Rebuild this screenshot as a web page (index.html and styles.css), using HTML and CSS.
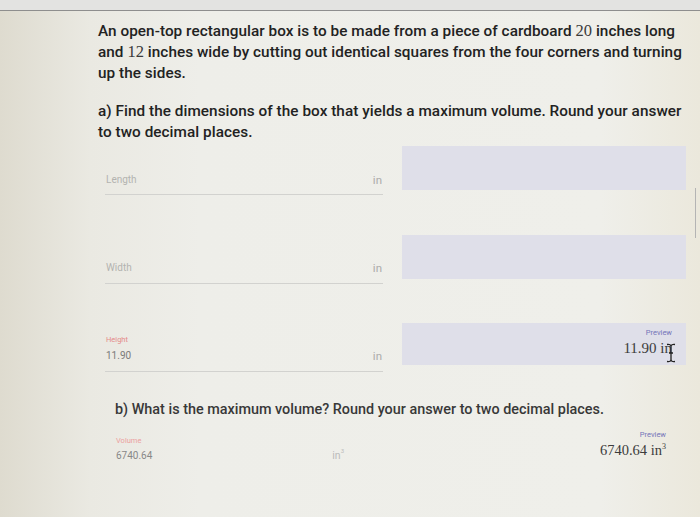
FILE: index.html
```html
<!DOCTYPE html>
<html>
<head>
<meta charset="utf-8">
<link rel="stylesheet" href="styles.css">
</head>
<body>
<div class="topbar"></div>
<div class="edge"></div>
<main class="content">
  <p class="q">An open-top rectangular box is to be made from a piece of cardboard <span class="m">20</span> inches long and <span class="m">12</span> inches wide by cutting out identical squares from the four corners and turning up the sides.</p>
  <p class="q q2">a) Find the dimensions of the box that yields a maximum volume. Round your answer to two decimal places.</p>

  <div class="row r1">
    <div class="field">
      <div class="ftext"><span class="ph">Length</span></div>
      <span class="unit">in</span>
    </div>
    <div class="box"></div>
  </div>

  <div class="row r2">
    <div class="field">
      <div class="ftext"><span class="ph">Width</span></div>
      <span class="unit">in</span>
    </div>
    <div class="box"></div>
  </div>

  <div class="row r3">
    <div class="field">
      <div class="ftext"><span class="lbl">Height</span><span class="val">11.90</span></div>
      <span class="unit">in</span>
    </div>
    <div class="box prev">
      <span class="plbl">Preview</span>
      <span class="pval">11.90 in</span>
      <svg class="ibeam" width="10" height="20" viewBox="0 0 10 20"><path d="M1 1.5 Q5 1 5 3.5 L5 16.5 Q5 19 1 18.5 M9 1.5 Q5 1 5 3.5 M5 16.5 Q5 19 9 18.5 M3 10 L7 10" fill="none" stroke="#222" stroke-width="1.3"/></svg>
    </div>
  </div>

  <p class="qb">b) What is the maximum volume? Round your answer to two decimal places.</p>

  <div class="row r4">
    <div class="field nofield">
      <div class="ftext"><span class="lbl">Volume</span><span class="val">6740.64</span></div>
      <span class="unit">in<sup>3</sup></span>
    </div>
    <div class="box prev clear">
      <span class="plbl">Preview</span>
      <span class="pval">6740.64 in<sup>3</sup></span>
    </div>
  </div>
</main>
</body>
</html>
```

FILE: styles.css
```css
html, body {
  margin: 0;
  padding: 0;
}
body {
  width: 700px;
  height: 517px;
  overflow: hidden;
  position: relative;
  font-family: Roboto, "Liberation Sans", sans-serif;
  background: linear-gradient(90deg, #dedbcf 0px, #eae9e2 90px, #eeeee9 200px, #efefea 600px, #ebe8dc 700px);
}
.topbar {
  height: 10px;
  background: #e3e3e1;
  border-bottom: 1.5px solid #8e8e8e;
}
.edge {
  position: absolute;
  left: 695px;
  top: 188px;
  width: 1px;
  height: 50px;
  background: #b4b4b4;
}
.content {
  padding-left: 98px;
}
.q {
  margin: 10px 0 0;
  width: 590px;
  font-size: 15.3px;
  line-height: 21px;
  font-weight: 500;
  color: #222;
  letter-spacing: 0.05px;
}
.q2 {
  margin-top: 17px;
}
.m {
  font-family: "Liberation Serif", serif;
  font-weight: normal;
  font-size: 16.5px;
  line-height: 1;
  color: #3a3a3a;
}
.row {
  display: grid;
  grid-template-columns: 278px 284px;
  column-gap: 19px;
  margin-left: 7px;
}
.r1 { margin-top: 3px; }
.r2 { margin-top: 40px; }
.r3 { margin-top: 39px; }
.field {
  display: flex;
  justify-content: space-between;
  align-items: flex-end;
  border-bottom: 1px solid #d2d2cf;
  height: 49px;
  padding-bottom: 8px;
  box-sizing: border-box;
}
.r2 .field { padding-bottom: 9px; }
.r3 .field { height: 49px; padding-bottom: 9px; }
.ftext {
  display: flex;
  flex-direction: column;
  padding-left: 1px;
}
.ph {
  font-size: 10px;
  line-height: 12px;
  color: #b3b3b0;
}
.lbl {
  font-size: 7.5px;
  line-height: 10px;
  color: #e58a8a;
}
.val {
  margin-top: 5px;
  font-size: 10px;
  line-height: 12px;
  color: #7a7a7a;
}
.unit {
  font-size: 11.5px;
  line-height: 12px;
  color: #acacaa;
  padding-right: 1px;
}
.unit sup {
  font-size: 6px;
  line-height: 1;
  vertical-align: 6px;
}
.box {
  height: 44px;
  background: #dfdfe9;
}
.r3 .box { height: 42px; }
.prev {
  position: relative;
  display: flex;
  flex-direction: column;
  align-items: flex-end;
  padding: 5px 14px 0 0;
  box-sizing: border-box;
}
.plbl {
  font-size: 7.5px;
  line-height: 10px;
  color: #7474b8;
}
.pval {
  margin-top: 2px;
  font-family: "Liberation Serif", serif;
  font-size: 15px;
  line-height: 17px;
  color: #3c3c3c;
}
.pval sup {
  font-size: 8px;
  line-height: 1;
  vertical-align: 6px;
}
.ibeam {
  position: absolute;
  left: 264px;
  top: 20px;
}
.qb {
  margin: 28px 0 0 17px;
  font-size: 14.4px;
  line-height: 20px;
  font-weight: 500;
  color: #383838;
}
.r4 {
  margin-left: 17px;
  margin-top: 10px;
  grid-template-columns: 230px 322px;
  column-gap: 15px;
}
.nofield {
  border-bottom: none;
  height: 36px;
  padding-bottom: 4px;
}
.r4 .lbl { color: #eba0a0; }
.r4 .val { margin-top: 4px; color: #888; }
.r4 .unit { padding-bottom: 0; color: #bbb; font-size: 10.5px; }
.clear {
  background: transparent;
  height: 36px;
  padding-top: 0;
  padding-right: 16px;
}
.clear .pval { margin-top: 2px; font-size: 14.5px; }
```
